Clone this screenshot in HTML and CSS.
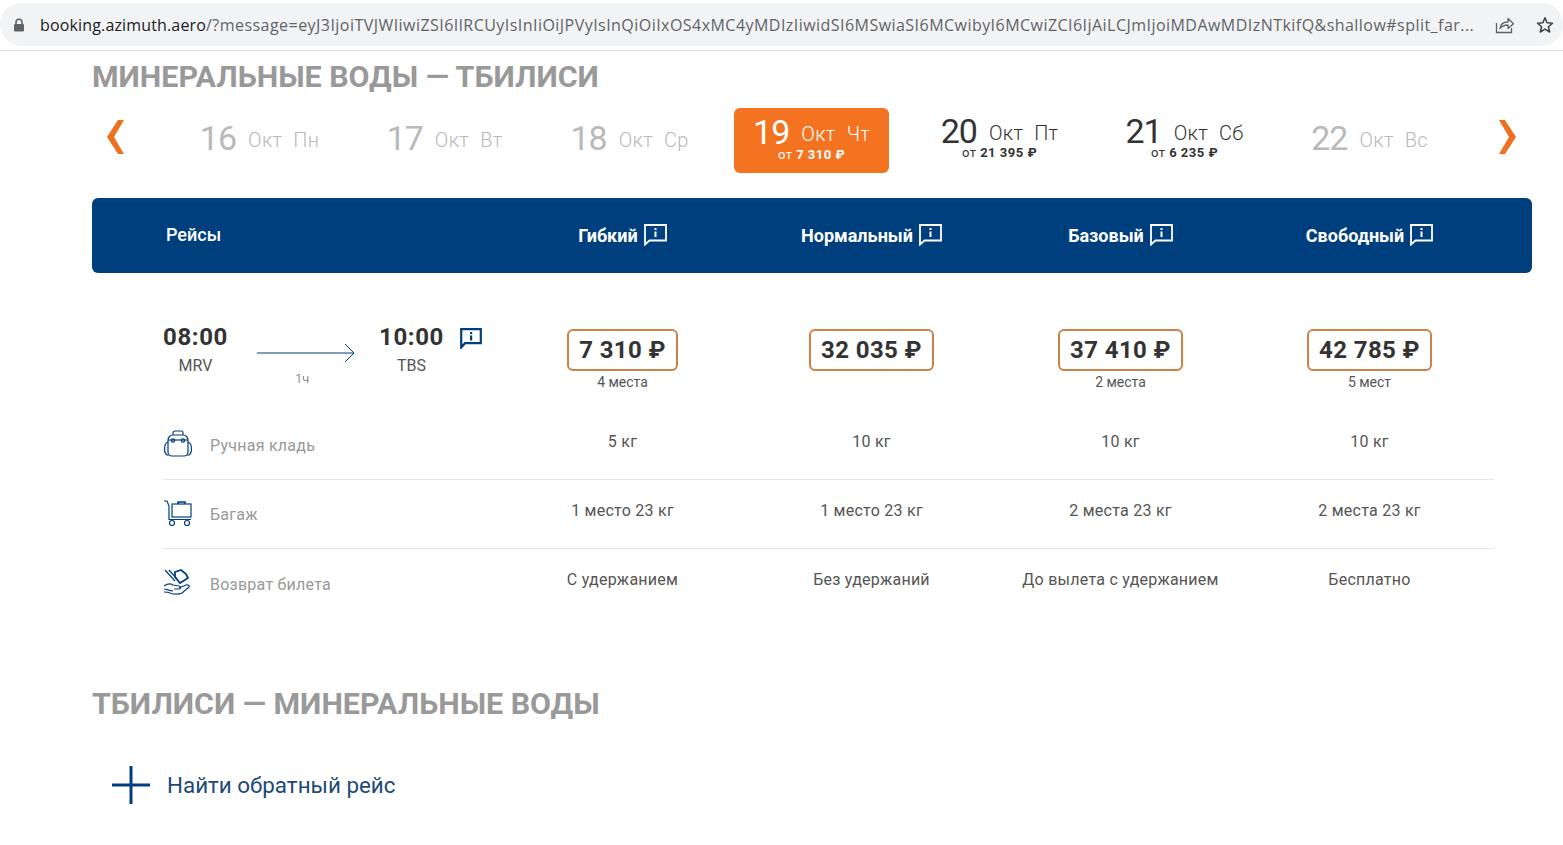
FILE: index.html
```html
<!DOCTYPE html>
<html lang="ru">
<head>
<meta charset="utf-8">
<title>Azimuth</title>
<link rel="stylesheet" href="styles.css">
</head>
<body>
<header class="browser">
  <div class="omnibox">
    <svg class="lock" width="12" height="14" viewBox="0 0 12 14"><path d="M3 6V4.200a3 3 0 0 1 6 0V6" fill="none" stroke="#5f6368" stroke-width="1.600"/><rect x="1" y="6" width="10" height="7.500" rx="1.200" fill="#5f6368"/></svg>
    <div class="url"><span class="host">booking.azimuth.aero</span>/?message=eyJ3IjoiTVJWIiwiZSI6IlRCUyIsInIiOiJPVyIsInQiOiIxOS4xMC4yMDIzIiwidSI6MSwiaSI6MCwibyI6MCwiZCI6IjAiLCJmIjoiMDAwMDIzNTkifQ&amp;shallow#split_far...</div>
    <svg class="share" width="20" height="18" viewBox="0 0 20 18"><path d="M1.500 7v9.500h15V12" fill="none" stroke="#5f6368" stroke-width="1.300"/><path d="M5 12.500c.5-4 3.500-6.500 8-6.500V2.500l5.500 5.200L13 12.500V9c-3.500 0-6 1-8 3.500z" fill="none" stroke="#5f6368" stroke-width="1.300" stroke-linejoin="round"/></svg>
    <svg class="star" width="18" height="18" viewBox="0 0 18 18"><path d="M9 1.800l2.100 5 5.400.4-4.100 3.500 1.300 5.300L9 13.200 4.300 16l1.300-5.300L1.500 7.200l5.400-.4z" fill="none" stroke="#3c4043" stroke-width="1.500" stroke-linejoin="round"/></svg>
  </div>
</header>

<main class="page">
  <h2 class="route route-out">Минеральные воды — Тбилиси</h2>

  <section class="dates">
    <svg class="chevron" width="18" height="34" viewBox="0 0 18 34"><path d="M11 0h6L7 17l10 17h-6L0 17z" fill="#ef7021"/></svg>
    <div class="days">
      <div class="day off"><div class="day-line"><span class="num">16</span><span class="mon">Окт</span><span class="dow">Пн</span></div></div>
      <div class="day off"><div class="day-line"><span class="num">17</span><span class="mon">Окт</span><span class="dow">Вт</span></div></div>
      <div class="day off"><div class="day-line"><span class="num">18</span><span class="mon">Окт</span><span class="dow">Ср</span></div></div>
      <div class="day active"><div class="day-line"><span class="num">19</span><span class="mon">Окт</span><span class="dow">Чт</span></div><div class="from">от <b>7 310 ₽</b></div></div>
      <div class="day"><div class="day-line"><span class="num">20</span><span class="mon">Окт</span><span class="dow">Пт</span></div><div class="from">от <b>21 395 ₽</b></div></div>
      <div class="day"><div class="day-line"><span class="num">21</span><span class="mon">Окт</span><span class="dow">Сб</span></div><div class="from">от <b>6 235 ₽</b></div></div>
      <div class="day off"><div class="day-line"><span class="num">22</span><span class="mon">Окт</span><span class="dow">Вс</span></div></div>
    </div>
    <svg class="chevron" width="18" height="34" viewBox="0 0 18 34"><path d="M1 0h6l11 17L7 34H1l10-17z" fill="#ef7021"/></svg>
  </section>

  <section class="thead">
    <div class="th-first">Рейсы</div>
    <div class="th"><span>Гибкий</span><svg class="info" width="23" height="22" viewBox="0 0 23 22"><path d="M1 1h21v15.500H5.500L1 20.500z" fill="none" stroke="#fff" stroke-width="1.800"/><rect x="10.500" y="4" width="2" height="2" fill="#fff"/><rect x="10.500" y="7.500" width="2" height="5.500" fill="#fff"/></svg></div>
    <div class="th"><span>Нормальный</span><svg class="info" width="23" height="22" viewBox="0 0 23 22"><path d="M1 1h21v15.500H5.500L1 20.500z" fill="none" stroke="#fff" stroke-width="1.800"/><rect x="10.500" y="4" width="2" height="2" fill="#fff"/><rect x="10.500" y="7.500" width="2" height="5.500" fill="#fff"/></svg></div>
    <div class="th"><span>Базовый</span><svg class="info" width="23" height="22" viewBox="0 0 23 22"><path d="M1 1h21v15.500H5.500L1 20.500z" fill="none" stroke="#fff" stroke-width="1.800"/><rect x="10.500" y="4" width="2" height="2" fill="#fff"/><rect x="10.500" y="7.500" width="2" height="5.500" fill="#fff"/></svg></div>
    <div class="th"><span>Свободный</span><svg class="info" width="23" height="22" viewBox="0 0 23 22"><path d="M1 1h21v15.500H5.500L1 20.500z" fill="none" stroke="#fff" stroke-width="1.800"/><rect x="10.500" y="4" width="2" height="2" fill="#fff"/><rect x="10.500" y="7.500" width="2" height="5.500" fill="#fff"/></svg></div>
  </section>

  <section class="tbody">
    <div class="flight">
      <div class="flight-info">
        <div class="stop"><div class="time">08:00</div><div class="code">MRV</div></div>
        <div class="path">
          <svg width="98" height="20" viewBox="0 0 98 20"><path d="M0 10h97M88 1l9 9-9 9" fill="none" stroke="#003f7d" stroke-width="1"/></svg>
          <div class="dur">1ч</div>
        </div>
        <div class="stop"><div class="time">10:00</div><div class="code">TBS</div></div>
        <svg class="flight-note" width="22" height="21" viewBox="0 0 22 21"><path d="M1.200 1.200h19.600v14H5L1.200 19.500z" fill="none" stroke="#003f7d" stroke-width="2.200"/><rect x="10" y="4" width="2.200" height="2.200" fill="#003f7d"/><rect x="10" y="7.500" width="2.200" height="5" fill="#003f7d"/></svg>
      </div>
      <div class="fare"><div class="price">7 310 ₽</div><div class="seats">4 места</div></div>
      <div class="fare"><div class="price">32 035 ₽</div></div>
      <div class="fare"><div class="price">37 410 ₽</div><div class="seats">2 места</div></div>
      <div class="fare"><div class="price">42 785 ₽</div><div class="seats">5 мест</div></div>
    </div>

    <div class="row">
      <div class="label">
        <svg class="row-icon" width="30" height="28" viewBox="0 0 30 28" fill="none" stroke="#003f7d" stroke-width="1.200"><path d="M10 5V3a2 2 0 0 1 2-2h6a2 2 0 0 1 2 2v2"/><path d="M5 15V10a5 5 0 0 1 5-5h10a5 5 0 0 1 5 5v5"/><path d="M5 10h20"/><circle cx="10" cy="10.500" r="1.600"/><circle cx="20" cy="10.500" r="1.600"/><path d="M5 12C2 13 1.500 16 1.500 19c0 4 1.500 6 4 6.500M25 12c3 1 3.500 4 3.500 7 0 4-1.500 6-4 6.500"/><path d="M5 15v7a4 4 0 0 0 4 4h12a4 4 0 0 0 4-4v-7"/></svg>
        <span>Ручная кладь</span>
      </div>
      <div class="val">5 кг</div><div class="val">10 кг</div><div class="val">10 кг</div><div class="val">10 кг</div>
    </div>
    <div class="row">
      <div class="label">
        <svg class="row-icon" width="30" height="28" viewBox="0 0 30 28" fill="none" stroke="#003f7d" stroke-width="1.200"><path d="M1 2h3l2 5v13.500h22"/><rect x="9" y="5" width="19" height="13"/><path d="M15 5V3h7v2" stroke-width="1.600"/><circle cx="9" cy="24" r="2.500"/><circle cx="24" cy="24" r="2.500"/></svg>
        <span>Багаж</span>
      </div>
      <div class="val">1 место 23 кг</div><div class="val">1 место 23 кг</div><div class="val">2 места 23 кг</div><div class="val">2 места 23 кг</div>
    </div>
    <div class="row">
      <div class="label">
        <svg class="row-icon" width="30" height="28" viewBox="0 0 30 28" fill="none" stroke="#003f7d" stroke-width="1.200"><path d="M2 1l10 11M6 1l8 9"/><path d="M12 3l6-2 5 4 2 4-8 5-5-6z" stroke-width="1.800"/><path d="M1 17c3-2 6-3 9-1l6 1c2 .5 2 3 0 3h-5"/><path d="M16 19l7-3c2-.5 4 .5 3 2l-7 6c-4 2-9 1-12 0-2-1-4-1-6-1"/><path d="M1 20c3 0 5 2 9 2"/></svg>
        <span>Возврат билета</span>
      </div>
      <div class="val">С удержанием</div><div class="val">Без удержаний</div><div class="val">До вылета с удержанием</div><div class="val">Бесплатно</div>
    </div>
  </section>

  <h2 class="route route-back">Тбилиси — Минеральные воды</h2>

  <a class="add-return" href="#">
    <svg width="38" height="38" viewBox="0 0 38 38"><path d="M0 19h38M19 0v38" stroke="#003f7d" stroke-width="3" fill="none"/></svg>
    <span>Найти обратный рейс</span>
  </a>
</main>
</body>
</html>
```
FILE: styles.css
```css
* { box-sizing: border-box; }
html, body { margin: 0; padding: 0; background: #fff; }
body { font-family: Roboto, "Liberation Sans", sans-serif; color: #333; overflow: hidden; }

.browser { height: 51px; padding-top: 3px; border-bottom: 1px solid #dadce0; }
.omnibox { height: 43px; background: #f1f3f4; border-radius: 22px; display: flex; align-items: center; padding-left: 13px; }
.lock { flex: none; margin-right: 15px; }
.url { font: 16px "Open Sans", "Noto Sans", sans-serif; color: #5f6368; white-space: nowrap; width: 1434px; flex: none; letter-spacing: .46px; overflow: hidden; }
.host { color: #202124; letter-spacing: .15px; }
.share { flex: none; margin-left: 21px; }
.star { flex: none; margin-left: 21px; }

.page { padding: 0 31px 0 92px; }
.route { margin: 0; font-size: 30.4px; line-height: 40px; font-weight: 700; color: #999; text-transform: uppercase; }
.route-out { margin-top: 6px; }
.route-back { margin-top: 66px; }

.dates { display: flex; align-items: center; height: 65px; margin-top: 11px; padding-left: 15px; }
.chevron { flex: none; margin-bottom: 8px; }
.days { flex: none; display: flex; width: 1373px; padding-left: 57px; align-items: center; gap: 30px; }
.day { width: 155px; flex: none; text-align: center; color: #333; margin-bottom: 2px; }
.day-line { display: flex; justify-content: center; align-items: flex-start; height: 26px; }
.num { font-size: 34px; line-height: 23px; font-weight: 400; letter-spacing: -1px; }
.mon { font-size: 20px; font-weight: 300; margin-left: 12px; letter-spacing: .3px; padding-top: 1px; }
.dow { font-size: 20px; font-weight: 300; margin-left: 11px; letter-spacing: .2px; padding-top: 1px; }
.from { font-size: 13px; line-height: 14px; letter-spacing: .5px; }
.from b { font-weight: 700; }
.day.off { color: #b9b9b9; }
.day.active { height: 65px; margin: 0 3px 0 -3px; background: #f47321; color: #fff; border-radius: 6px; padding-top: 13px; }
.day.active .from { margin-top: 1px; }

.thead { display: grid; grid-template-columns: 406px repeat(4, 249px); height: 75px; margin-top: 25px; background: #003f7d; border-radius: 6px; color: #fff; align-items: center; }
.th-first { padding-left: 74px; font-size: 18px; font-weight: 500; padding-bottom: 3px; }
.th { display: flex; justify-content: center; align-items: center; gap: 6px; font-size: 18px; font-weight: 700; padding-bottom: 1px; }
.info { flex: none; }

.tbody { margin: 48px 38px 0 71px; }
.flight { display: grid; grid-template-columns: 335px repeat(4, 249px); height: 90px; }
.flight-info { display: flex; align-items: flex-start; }
.stop { width: 65px; text-align: center; flex: none; margin-top: 1px; }
.time { font-size: 24px; line-height: 30px; font-weight: 700; letter-spacing: .6px; }
.code { font-size: 16px; line-height: 20px; color: #555; margin-top: 4px; }
.path { width: 98px; margin: 22px 24px 0 29px; flex: none; text-align: center; }
.path svg { display: block; }
.dur { font-size: 13px; line-height: 16px; color: #555; margin-top: 8px; padding-right: 8px; font-weight: 300; }
.flight-note { margin: 7px 0 0 16px; flex: none; }
.fare { display: flex; flex-direction: column; align-items: center; padding-top: 8px; }
.price { height: 42px; padding: 0 10px; border: 2px solid #cf8046; border-radius: 6px; font-size: 24px; font-weight: 700; line-height: 39px; letter-spacing: .4px; white-space: nowrap; }
.seats { font-size: 14px; line-height: 18px; color: #555; margin-top: 2px; }

.row { display: grid; grid-template-columns: 335px repeat(4, 249px); height: 69px; border-bottom: 1px solid #e8e8e8; }
.row:last-child { border-bottom: 0; }
.label { display: flex; align-items: center; color: #999; font-size: 16px; letter-spacing: .25px; }
.label span { padding-top: 1px; }
.row-icon { flex: none; margin: 0 17px 2px 0; }
.val { text-align: center; font-size: 16px; letter-spacing: .25px; line-height: 20px; color: #555; padding-top: 21px; }

.add-return { display: flex; align-items: center; gap: 17px; margin: 42px 0 0 20px; color: #1d4a78; font-size: 22.4px; text-decoration: none; }
```
